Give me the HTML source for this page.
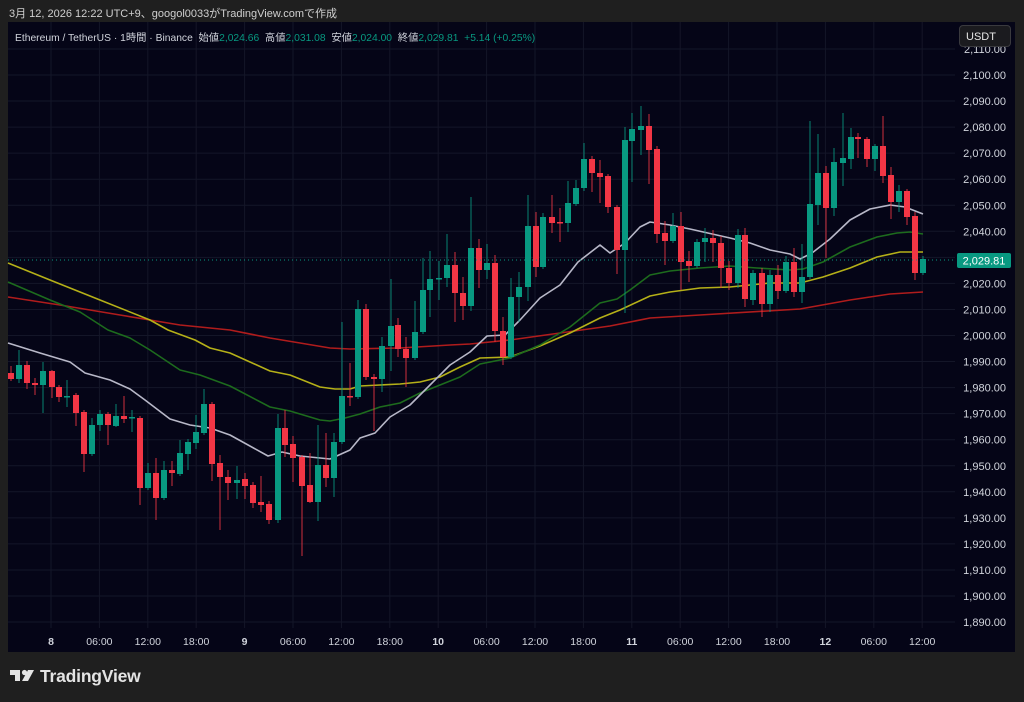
<!DOCTYPE html>
<html><head><meta charset="utf-8">
<style>
html,body{margin:0;padding:0;width:1024px;height:702px;background:#1f1f1f;overflow:hidden;font-family:"Liberation Sans","Noto Sans CJK JP",sans-serif}
#cap{position:absolute;left:9px;top:5px;font-size:11px;color:#cfcfcf;white-space:nowrap}
#chart{position:absolute;left:8px;top:22px;width:1007px;height:630px;background:#050517}
#hdr{position:absolute;left:15px;top:29px;font-size:10.3px;color:#d1d4dc;white-space:nowrap}
#hdr .v{color:#089981}
#usdt{position:absolute;left:959px;top:25px;width:52px;height:22px;background:#1b1b1f;border:1px solid #3a3a3e;border-radius:4px;color:#e6e6e6;font-size:11px;line-height:22px;box-sizing:border-box;padding-left:6px}
#logo{position:absolute;left:40px;top:666px;font-size:17.5px;font-weight:bold;color:#e4e4e4;letter-spacing:-0.2px}
svg{position:absolute;left:0;top:0}
</style></head><body>
<div id="cap">3月 12, 2026 12:22 UTC+9、googol0033がTradingView.comで作成</div>
<div id="chart"></div>
<svg id="s" width="1024" height="702"></svg>
<div id="hdr">Ethereum / TetherUS · 1時間 · Binance&nbsp;&nbsp;始値<span class="v">2,024.66</span>&nbsp;&nbsp;高値<span class="v">2,031.08</span>&nbsp;&nbsp;安値<span class="v">2,024.00</span>&nbsp;&nbsp;終値<span class="v">2,029.81&nbsp;&nbsp;+5.14 (+0.25%)</span></div>
<div id="usdt">USDT</div>
<svg width="40" height="30" style="left:9px;top:666px"><path d="M1 4h10v11h-5v-6h-5z" fill="#e4e4e4"/><circle cx="15.5" cy="6.5" r="2.6" fill="#e4e4e4"/><path d="M19 4h6l-6 11h-6z" fill="#e4e4e4"/></svg>
<div id="logo">TradingView</div>
<script>
var s=document.getElementById('s'),h='';
for(var k=-1;k<22;k++){var y=75+k*26.05;if(y<24||y>628)continue;h+='<line x1="8" x2="955" y1="'+y+'" y2="'+y+'" stroke="#141628" stroke-width="1"/>';}
var tl=['8','06:00','12:00','18:00','9','06:00','12:00','18:00','10','06:00','12:00','18:00','11','06:00','12:00','18:00','12','06:00','12:00'];
for(var i=0;i<tl.length;i++){var x=51+48.4*i;h+='<line x1="'+x+'" x2="'+x+'" y1="22" y2="628" stroke="#141628"/>';
var b=/^\d+$/.test(tl[i]);h+='<text x="'+x+'" y="645" fill="#d1d4dc" font-size="10.5" text-anchor="middle" font-family="Liberation Sans" '+(b?'font-weight="bold"':'')+'>'+tl[i]+'</text>';}
for(var k=-1;k<22;k++){var y=75+k*26.05;if(y<40||y>628)continue;var p=2100-k*10;var t=p.toLocaleString('en-US')+'.00';
h+='<text x="1006" y="'+(y+4)+'" fill="#d1d4dc" font-size="11" text-anchor="end" font-family="Liberation Sans">'+t+'</text>';}
function pl(pts,c,w){h+='<polyline fill="none" stroke="'+c+'" stroke-width="'+w+'" stroke-linejoin="round" points="'+pts+'"/>';}
pl('8,297 60,305 120,315 180,325 230,330 270,338 300,343 330,348 350,349 400,348 450,345 470,344 510,340 560,333 610,326 650,318 700,315 800,309 850,300 890,294 923,292','#b01c1c',1.6);
pl('8,263 50,280 100,300 150,320 168,330 195,340 210,348 230,353 270,371 290,375 320,387 335,389 350,389 360,386 380,385 400,384 420,382 440,377 460,367 480,358 510,357 540,346 570,333 600,318 620,310 650,296 670,292 700,288 730,287 770,283 800,283 823,277 850,268 877,257 900,252 923,252','#b5b018',1.6);
pl('8,282 50,300 80,312 108,330 130,338 150,350 180,370 200,375 230,386 270,407 290,411 320,420 330,421 345,418 360,414 380,407 400,403 420,393 440,385 460,377 480,364 510,358 540,345 570,327 600,303 617,299 630,290 650,275 670,271 700,268 730,266 757,268 790,270 803,269 823,262 850,247 877,237 897,233 910,232 923,234','#1d6b1d',1.6);
pl('8,343 40,353 70,362 85,373 110,380 130,389 145,400 170,419 190,425 210,428 230,435 268,456 282,452 300,456 330,459 350,450 360,438 375,433 390,417 410,405 430,385 450,365 470,352 487,336 505,335 520,320 540,298 560,285 578,262 600,245 610,253 625,243 640,227 650,222 670,225 690,229 730,238 750,243 770,250 790,254 800,259 812,253 830,239 850,220 870,209 890,205 905,207 923,214','#b8b8c8',1.6);
var C=[[11,373,379,366,381],[19,379,365,350,383],[27,365,383,361,389],[35,383,385,378,395],[43,385,371,362,413],[52,371,387,370,398],[59,387,397,385,402],[67,397,396,380,407],[76,395,413,393,426],[84,412,454,410,472],[92,454,425,418,456],[100,425,414,410,431],[108,414,425,412,445],[116,426,416,404,427],[124,416,419,396,423],[132,418,417,410,432],[140,418,488,416,505],[148,488,473,463,490],[156,473,498,458,520],[164,498,470,461,500],[172,470,473,461,486],[180,474,453,440,476],[188,454,442,439,470],[196,443,432,415,449],[204,433,404,389,435],[212,404,464,402,481],[220,463,477,455,530],[228,477,483,470,500],[237,483,480,466,499],[245,479,486,473,499],[253,485,503,482,508],[261,502,505,476,512],[269,504,520,501,524],[278,520,428,414,523],[285,428,445,410,457],[293,444,458,436,482],[302,457,486,455,556],[310,485,502,453,503],[318,502,465,425,521],[326,465,478,433,487],[334,478,442,433,497],[342,442,396,322,444],[350,396,397,363,406],[358,397,309,300,399],[366,309,377,304,380],[374,377,379,374,431],[382,379,346,337,392],[391,346,326,279,371],[398,325,349,318,357],[406,349,358,337,387],[415,358,332,301,360],[423,332,290,258,334],[430,290,279,251,317],[439,279,278,261,300],[447,278,265,234,287],[455,265,293,252,322],[463,293,306,277,320],[471,306,248,197,311],[479,248,270,239,288],[487,270,263,244,279],[495,263,331,255,342],[503,331,357,317,365],[511,357,297,278,359],[519,297,287,272,322],[528,287,226,195,301],[536,226,267,212,277],[543,267,217,213,269],[552,217,223,195,233],[560,222,223,208,242],[568,223,203,181,232],[576,204,188,180,206],[584,188,159,143,191],[592,159,173,156,192],[600,173,177,160,203],[608,176,207,174,213],[617,207,250,205,274],[625,250,140,127,313],[632,141,129,113,182],[641,130,126,106,155],[649,126,150,114,184],[657,149,234,146,243],[665,233,241,221,265],[673,241,226,213,243],[681,226,262,212,290],[689,261,266,251,282],[697,266,242,239,268],[705,242,238,228,262],[713,238,243,230,262],[721,243,268,236,288],[729,268,283,261,290],[738,283,235,229,288],[745,235,299,228,307],[753,300,273,270,305],[762,273,304,268,317],[770,304,275,270,312],[778,275,291,265,299],[786,291,262,256,293],[794,262,292,248,297],[802,292,277,244,303],[810,277,204,121,279],[818,205,173,134,225],[826,173,208,166,258],[834,208,162,148,216],[843,163,158,113,186],[851,159,137,128,169],[858,137,139,133,158],[867,139,159,137,167],[875,159,146,144,171],[883,146,176,116,183],[891,175,202,167,219],[899,202,191,185,212],[907,191,217,189,225],[915,216,273,212,280],[923,273,259,256,275]];
C.forEach(function(c){var up=c[2]<c[1],col=up?'#089981':'#f23645',t=Math.min(c[1],c[2]),bh=Math.max(1.5,Math.abs(c[1]-c[2]));
h+='<line x1="'+c[0]+'" x2="'+c[0]+'" y1="'+c[3]+'" y2="'+c[4]+'" stroke="'+col+'" stroke-width="1" opacity="0.85"/>';
h+='<rect x="'+(c[0]-3)+'" y="'+t+'" width="6" height="'+bh+'" fill="'+col+'"/>';});
h+='<line x1="8" x2="955" y1="260" y2="260" stroke="#089981" stroke-dasharray="1,3" stroke-width="1"/>';
h+='<rect x="957" y="253" width="54" height="15" rx="2" fill="#089981"/><text x="984" y="264.5" fill="#fff" font-size="11" text-anchor="middle" font-family="Liberation Sans">2,029.81</text>';
s.innerHTML=h;
</script>
</body></html>
